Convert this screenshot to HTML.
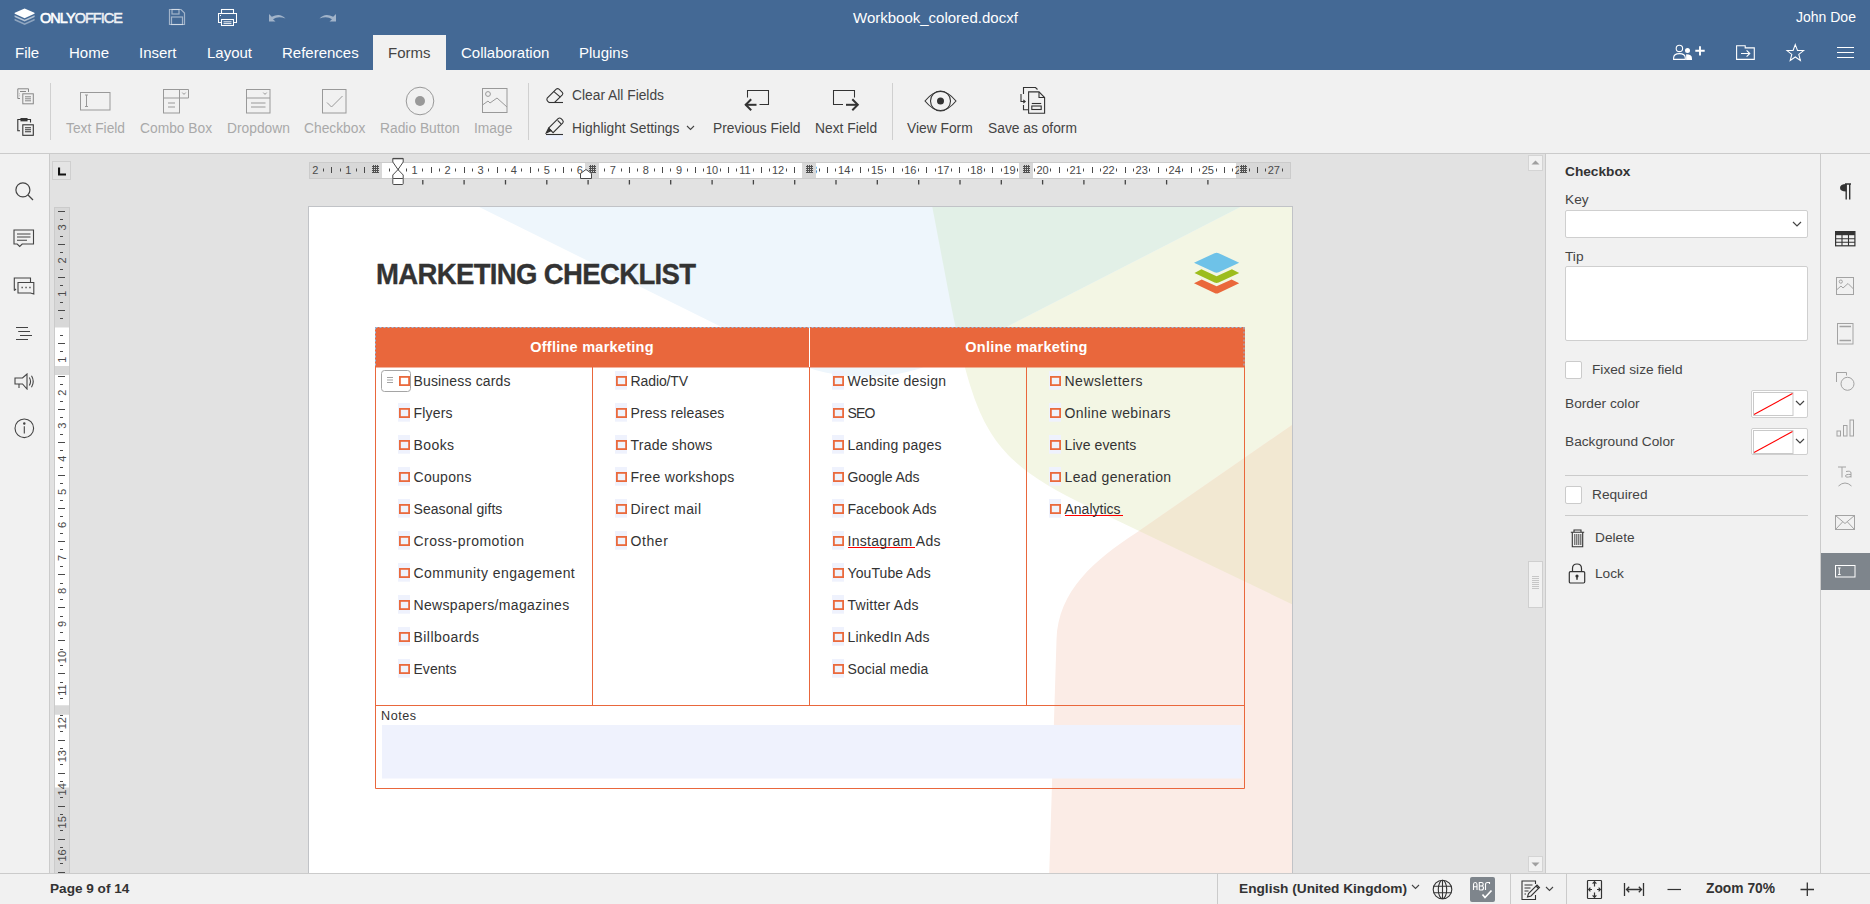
<!DOCTYPE html>
<html><head><meta charset="utf-8">
<style>
*{box-sizing:border-box;margin:0;padding:0}
html,body{width:1870px;height:904px;overflow:hidden;background:#f1f1f1;font-family:"Liberation Sans",sans-serif;position:relative}
.a{position:absolute}
#hdr{left:0;top:0;width:1870px;height:70px;background:#446995}
.tab{position:absolute;top:35px;height:35px;color:#fff;font-size:15px;line-height:35px}
#tb{left:0;top:70px;width:1870px;height:84px;background:#f1f1f1;border-bottom:1px solid #cbcbcb}
.lbl{position:absolute;font-size:13px;color:#444;white-space:nowrap;line-height:15px}
.dis{color:#a9a9a9}
.sep{position:absolute;width:1px;background:#d0d0d0}
#left{left:0;top:154px;width:50px;height:719px;background:#f1f1f1;border-right:1px solid #cbcbcb}
#canvas{left:50px;top:154px;width:1495px;height:719px;background:#e2e2e2}
#right{left:1545px;top:154px;width:275px;height:719px;background:#f1f1f1;border-left:1px solid #cbcbcb}
#rstrip{left:1820px;top:154px;width:50px;height:719px;background:#f1f1f1;border-left:1px solid #cbcbcb}
#status{left:0;top:873px;width:1870px;height:31px;background:#f1f1f1;border-top:1px solid #cbcbcb}
#page{left:308px;top:206px;width:985px;height:667px;background:#fff;overflow:hidden;border:1px solid #c1c3c7;border-bottom:none}
.it{font-family:"Liberation Sans",sans-serif;font-size:14px;letter-spacing:0.3px;color:#333;line-height:16px;white-space:nowrap}
.doc{font-family:"Liberation Sans",sans-serif;color:#333}
</style></head><body>
<div id="hdr" class="a">
<svg class="a" style="left:14px;top:8px" width="22" height="18" viewBox="0 0 22 18">
<path d="M0.6 10.8 L10.6 15.3 L20.6 10.8 V12.6 L10.6 17.1 L0.6 12.6 Z" fill="#fff" opacity=".4"/>
<path d="M0.6 7.2 L10.6 11.7 L20.6 7.2 V9 L10.6 13.5 L0.6 9 Z" fill="#fff" opacity=".6"/>
<path d="M10.6 0.4 L20.4 4.8 Q21 5.3 20.4 5.8 L10.6 10.2 L0.8 5.8 Q0.2 5.3 0.8 4.8 Z" fill="#fff"/>
</svg>
<div class="a" style="left:40px;top:10px;font:14.5px 'Liberation Sans';letter-spacing:-0.95px;-webkit-text-stroke:0.55px #fff;color:#fff;line-height:16px">ONLY<span style="color:rgba(255,255,255,.85);-webkit-text-stroke:0.55px rgba(255,255,255,.85)">OFFICE</span></div>
<svg class="a" style="left:168px;top:8px" width="18" height="18" viewBox="0 0 18 18" fill="none" stroke="#fff" stroke-opacity=".5" stroke-width="1.2">
<path d="M1.5 1.5 H13 L16.5 5 V16.5 H1.5 Z"/><rect x="4" y="1.5" width="7" height="4.5"/><rect x="3.5" y="9" width="11" height="7.5"/>
</svg>
<svg class="a" style="left:217px;top:8px" width="21" height="19" viewBox="217 8 21 19" fill="none" stroke="#fff" stroke-width="1.05">
<rect x="221.5" y="9.5" width="12" height="4"/><path d="M221.5 22.5 H218.5 V13.5 H236.5 V22.5 H233.5"/><rect x="221.5" y="19.5" width="12" height="6"/><path d="M223.5 21.8 H231.5 M223.5 23.6 H231.5" stroke-width="0.9"/><rect x="220" y="15" width="1" height="1" fill="#fff" stroke="none"/>
</svg>
<svg class="a" style="left:268px;top:13px" width="19" height="10" viewBox="0 0 19 10">
<path d="M1 1 L1 8.5 L7.5 8.5 L5 6.2 Q10 2.6 17.5 5.5 Q12 -0.6 3.8 3.8 Z" fill="#fff" opacity=".5"/>
</svg>
<svg class="a" style="left:318px;top:13px" width="19" height="10" viewBox="0 0 19 10">
<path d="M18 1 L18 8.5 L11.5 8.5 L14 6.2 Q9 2.6 1.5 5.5 Q7 -0.6 15.2 3.8 Z" fill="#fff" opacity=".5"/>
</svg>
<div class="a" style="left:853px;top:9px;font-size:15px;color:#fff;line-height:17px">Workbook_colored.docxf</div>
<div class="a" style="left:1796px;top:9px;font-size:14px;color:#fff;line-height:16px">John Doe</div>
<div class="tab" style="left:15px">File</div>
<div class="tab" style="left:69px">Home</div>
<div class="tab" style="left:139px">Insert</div>
<div class="tab" style="left:207px">Layout</div>
<div class="tab" style="left:282px">References</div>
<div class="a" style="left:373px;top:35px;width:73px;height:35px;background:#f1f1f1"></div>
<div class="tab" style="left:388px;color:#444">Forms</div>
<div class="tab" style="left:461px">Collaboration</div>
<div class="tab" style="left:579px">Plugins</div>


<svg class="a" style="left:1665px;top:38px" width="100" height="30" viewBox="1665 38 100 30" fill="none" stroke="#fff" stroke-width="1.1">
<circle cx="1679.4" cy="48.4" r="3.2"/><path d="M1673.6 59.4 V58 Q1673.6 53.6 1679.4 53.6 Q1685.3 53.6 1685.3 58 V59.4 Z"/>
<circle cx="1687.5" cy="50.6" r="2.5" fill="#fff" stroke="none"/><path d="M1686.1 59.9 V54.3 Q1692 54.3 1692 58.5 V59.9 Z" fill="#fff" stroke="none"/>
<path d="M1695.3 50.8 H1704.7 M1700 46.2 V55.4" stroke-width="1.9"/>
<path d="M1736.6 59.4 V45.7 H1745.2 V47.9 H1754.3 V59.4 Z"/><path d="M1741 53.5 H1749.8 M1746.6 50.3 L1749.8 53.5 L1746.6 56.7"/>
</svg>
<svg class="a" style="left:1775px;top:38px" width="90" height="30" viewBox="1775 38 90 30" fill="none" stroke="#fff" stroke-width="1.05">
<path d="M1795.3 44.6 L1797.5 50.4 L1803.6 50.6 L1798.8 54.4 L1800.4 60.5 L1795.3 57 L1790.2 60.5 L1791.8 54.4 L1787 50.6 L1793.1 50.4 Z" stroke-linejoin="miter"/>
<path d="M1837 47.5 H1854 M1837 52.5 H1854 M1837 57.5 H1854"/>
</svg>

</div>
<div id="tb" class="a">
<svg class="a" style="left:17px;top:18px" width="18" height="17" viewBox="0 0 18 17" fill="none" stroke="#888" stroke-width="1">
<path d="M3 10.5 H0.8 V0.8 H11.5 V4"/><path d="M3 3.5 H9 M2.5 5.8 H3 M2.5 7.8 H3"/><rect x="5.8" y="5.8" width="10.5" height="10"/><path d="M8 8.8 H14 M8 10.8 H14 M8 12.8 H14"/>
</svg>
<svg class="a" style="left:17px;top:48px" width="18" height="19" viewBox="0 0 18 19" fill="none" stroke="#333" stroke-width="1.1">
<path d="M3 12.8 H0.8 V1.5 H13.5 V4.5"/><rect x="4" y="0.4" width="6" height="2.4" fill="#333"/><rect x="5.8" y="6.8" width="10.5" height="10.5"/><path d="M8 9.8 H14 M8 11.8 H14 M8 13.8 H14"/>
</svg>
<div class="sep" style="left:50px;top:13px;height:57px"></div>

<svg class="a" style="left:80px;top:22px" width="31" height="19" viewBox="0 0 31 19" fill="none" stroke="#999" stroke-width="1">
<rect x="0.5" y="0.5" width="29.5" height="17.5"/><path d="M5 3 H8 M6.5 3 V14.5 M5 14.5 H8"/>
</svg>
<div class="lbl dis" style="left:66px;top:51px;font-size:13.8px">Text Field</div>
<svg class="a" style="left:163px;top:19px" width="27" height="25" viewBox="0 0 27 25" fill="none" stroke="#999" stroke-width="1">
<rect x="0.5" y="0.5" width="16" height="23.5"/><path d="M0.5 9 H25.5 V0.5 H16.5"/><path d="M19.3 3.6 L21 5.4 L22.7 3.6"/><path d="M5 14 H12 M5 18 H12"/>
</svg>
<div class="lbl dis" style="left:140px;top:51px;font-size:13.8px">Combo Box</div>
<svg class="a" style="left:246px;top:19px" width="25" height="25" viewBox="0 0 25 25" fill="none" stroke="#999" stroke-width="1">
<rect x="0.5" y="0.5" width="23.5" height="23.5"/><path d="M0.5 9 H24"/><path d="M17.3 3.6 L19 5.4 L20.7 3.6"/><path d="M5 14 H19.5 M5 18 H19.5"/>
</svg>
<div class="lbl dis" style="left:227px;top:51px;font-size:13.8px">Dropdown</div>
<svg class="a" style="left:322px;top:19px" width="25" height="25" viewBox="0 0 25 25" fill="none" stroke="#999" stroke-width="1">
<rect x="0.5" y="0.5" width="23.5" height="23.5"/><path d="M5 13.5 L9.5 18 L20.5 7"/>
</svg>
<div class="lbl dis" style="left:304px;top:51px;font-size:13.8px">Checkbox</div>
<svg class="a" style="left:405px;top:16px" width="30" height="30" viewBox="0 0 30 30" fill="none" stroke="#999" stroke-width="1">
<circle cx="15" cy="15" r="13.8"/><circle cx="15" cy="15" r="5" fill="#999" stroke="none"/>
</svg>
<div class="lbl dis" style="left:380px;top:51px;font-size:13.8px">Radio Button</div>
<svg class="a" style="left:482px;top:18px" width="26" height="26" viewBox="0 0 26 26" fill="none" stroke="#999" stroke-width="1">
<rect x="0.5" y="0.5" width="24.5" height="24"/><circle cx="6" cy="6" r="2.4"/><path d="M0.5 17 L6 13 L8 15 L15 10 L25 19"/>
</svg>
<div class="lbl dis" style="left:474px;top:51px;font-size:13.8px">Image</div>
<div class="sep" style="left:528px;top:13px;height:57px"></div>

<svg class="a" style="left:540px;top:14px" width="30" height="56" viewBox="540 84 30 56" fill="none" stroke="#333" stroke-width="1.1">
<path d="M549.2 102.5 Q546 100.3 547.2 98.2 L556.2 89.2 Q557.6 87.9 559 89.2 L562.3 92.4 Q563.4 93.6 562.3 94.8 L554.6 102.5 Z"/><path d="M553.9 91.6 L560.4 97.2"/><path d="M549 102.5 H563"/>
<path d="M548.6 128.2 L558.1 118.7 Q559.6 117.3 561.1 118.7 L562.6 120.2 Q564 121.7 562.6 123.2 L553.1 132.7 Z"/><path d="M546.2 133 L548.6 128.2 L551.1 130.7 Z" fill="#333"/><path d="M557.6 120.3 L561.1 123.8"/>
<rect x="546" y="135" width="17" height="4.5" fill="#eef2fd" stroke="none"/><path d="M546 134.5 H563" stroke-width="1.1"/>
</svg>
<div class="lbl" style="left:572px;top:18px;font-size:13.8px">Clear All Fields</div>

<div class="lbl" style="left:572px;top:51px;font-size:13.8px">Highlight Settings</div>
<svg class="a" style="left:686px;top:55px" width="9" height="6" viewBox="0 0 9 6" fill="none" stroke="#444" stroke-width="1.1"><path d="M1 1 L4.5 4.5 L8 1"/></svg>


<svg class="a" style="left:740px;top:15px" width="125" height="30" viewBox="740 85 125 30" fill="none" stroke="#333">
<path d="M747.5 97.5 V90.5 H768.5 V104.5 H759.5" stroke-width="1.05"/><path d="M745.5 104.8 H756.5" stroke-width="2"/><path d="M751.2 99.3 L745.7 104.8 L751.2 110.3" stroke-width="2"/>
<path d="M854.5 97.5 V90.5 H833.5 V104.5 H843" stroke-width="1.05"/><path d="M846 104.8 H857" stroke-width="2"/><path d="M852.3 99.3 L857.8 104.8 L852.3 110.3" stroke-width="2"/>
</svg>
<div class="lbl" style="left:713px;top:51px;font-size:13.8px">Previous Field</div>

<div class="lbl" style="left:815px;top:51px;font-size:13.8px">Next Field</div>
<div class="sep" style="left:892px;top:13px;height:57px"></div>

<svg class="a" style="left:924px;top:20px" width="33" height="22" viewBox="0 0 33 22" fill="none" stroke="#333" stroke-width="1.1">
<path d="M1 11 Q16.5 -8 32 11 Q16.5 30 1 11 Z"/><circle cx="16.5" cy="11" r="10"/><circle cx="16.5" cy="11" r="3.5" fill="#333" stroke="none"/>
</svg>
<div class="lbl" style="left:907px;top:51px;font-size:13.8px">View Form</div>
<svg class="a" style="left:1018px;top:15px" width="30" height="31" viewBox="1018 85 30 31" fill="none" stroke="#333" stroke-width="1.1">
<path d="M1023.5 94 V87.5 H1035.5 L1037.5 89.5"/><path d="M1021 94 V101.5 H1025"/><path d="M1023.3 99.8 L1025.2 101.5 L1023.3 103.2"/><path d="M1023.5 105 V109.8 H1028"/>
<path d="M1028.6 91.9 H1039 L1044.6 97.5 V113.3 H1028.6 Z"/><path d="M1039 91.9 V97.5 H1044.6"/><path d="M1031.8 103.5 H1041.2"/><rect x="1031.8" y="106" width="9.4" height="3.5"/>
</svg>
<div class="lbl" style="left:988px;top:51px;font-size:13.8px">Save as oform</div>
</div>
<div id="left" class="a">
<svg class="a" style="left:14px;top:27px" width="21" height="21" viewBox="0 0 21 21" fill="none" stroke="#444" stroke-width="1.2">
<circle cx="8.9" cy="8.9" r="7"/><path d="M14 14 L19 19"/>
</svg>
<svg class="a" style="left:13px;top:75px" width="22" height="20" viewBox="0 0 22 20" fill="none" stroke="#444" stroke-width="1.1">
<path d="M1 1 H20.5 V15 H9.2 L6.7 17.5 L4.2 15 H1 Z"/><path d="M4 5 H17.5 M4 8 H17.5 M4 11.2 H14"/>
</svg>
<svg class="a" style="left:13px;top:123px" width="22" height="20" viewBox="0 0 22 20" fill="none" stroke="#444" stroke-width="1.1">
<path d="M1.3 13.5 V1 H17.5 V5"/><path d="M1.3 13.5 L3 12"/><path d="M5 5.5 H20.8 V17 L17.5 16 H5 Z"/><path d="M8.5 10.5 H9.8 M12.4 10.5 H13.7 M16.3 10.5 H17.6" stroke-width="1.6"/>
</svg>
<svg class="a" style="left:15px;top:172px" width="18" height="15" viewBox="0 0 18 15" stroke="#444" stroke-width="1.1">
<path d="M1 1.5 H13 M3.2 5.5 H15 M5 9.5 H17 M1 13.5 H13"/>
</svg>
<svg class="a" style="left:14px;top:219px" width="21" height="17" viewBox="0 0 21 17" fill="none" stroke="#444" stroke-width="1.1">
<path d="M1 5 H8.5 L13 1 V16 L8.5 11 H1 Z"/><path d="M5 11 V15"/><path d="M15.3 4.5 Q17.8 8.5 15.3 12.5 M17.5 2.8 Q21 8.5 17.5 14.2"/>
</svg>
<svg class="a" style="left:14px;top:264px" width="21" height="21" viewBox="0 0 21 21" fill="none" stroke="#444" stroke-width="1.1">
<circle cx="10.3" cy="10.3" r="9.3"/><path d="M10.3 8.2 V15.5"/><circle cx="10.3" cy="5.6" r=".7" fill="#444"/>
</svg>
</div>
<div id="canvas" class="a"></div>
<div class="a" style="left:52px;top:161px;width:19px;height:19px;background:#e4e4e4;border:1px solid #cfcfcf"></div>
<svg class="a" style="left:58px;top:167px" width="9" height="9" viewBox="0 0 9 9"><path d="M1 0.5 V7.5 H8" fill="none" stroke="#111" stroke-width="2.2"/></svg>
<svg class="a" style="left:300px;top:150px" width="1000" height="40" viewBox="300 150 1000 40">
<rect x="309.5" y="162.5" width="981" height="16" fill="#d8d8d8" stroke="#cbcbcb" stroke-width="1"/>
<rect x="382" y="163" width="203" height="15" fill="#fff"/>
<rect x="599" y="163" width="203" height="15" fill="#fff"/>
<rect x="816" y="163" width="203" height="15" fill="#fff"/>
<rect x="1033" y="163" width="203" height="15" fill="#fff"/>
<path d="M323.5 168.5V171.5 M331.5 167V173 M340.5 168.5V171.5 M356.5 168.5V171.5 M364.5 167V173 M373.5 168.5V171.5 M389.5 168.5V171.5 M398.5 167V173 M406.5 168.5V171.5 M422.5 168.5V171.5 M431.5 167V173 M439.5 168.5V171.5 M455.5 168.5V171.5 M464.5 167V173 M472.5 168.5V171.5 M488.5 168.5V171.5 M497.5 167V173 M505.5 168.5V171.5 M521.5 168.5V171.5 M530.5 167V173 M538.5 168.5V171.5 M555.5 168.5V171.5 M563.5 167V173 M571.5 168.5V171.5 M588.5 168.5V171.5 M596.5 167V173 M604.5 168.5V171.5 M621.5 168.5V171.5 M629.5 167V173 M637.5 168.5V171.5 M654.5 168.5V171.5 M662.5 167V173 M670.5 168.5V171.5 M687.5 168.5V171.5 M695.5 167V173 M703.5 168.5V171.5 M720.5 168.5V171.5 M728.5 167V173 M736.5 168.5V171.5 M753.5 168.5V171.5 M761.5 167V173 M769.5 168.5V171.5 M786.5 168.5V171.5 M794.5 167V173 M802.5 168.5V171.5 M819.5 168.5V171.5 M827.5 167V173 M835.5 168.5V171.5 M852.5 168.5V171.5 M860.5 167V173 M868.5 168.5V171.5 M885.5 168.5V171.5 M893.5 167V173 M902.5 168.5V171.5 M918.5 168.5V171.5 M926.5 167V173 M935.5 168.5V171.5 M951.5 168.5V171.5 M959.5 167V173 M968.5 168.5V171.5 M984.5 168.5V171.5 M992.5 167V173 M1001.5 168.5V171.5 M1017.5 168.5V171.5 M1025.5 167V173 M1034.5 168.5V171.5 M1050.5 168.5V171.5 M1059.5 167V173 M1067.5 168.5V171.5 M1083.5 168.5V171.5 M1092.5 167V173 M1100.5 168.5V171.5 M1116.5 168.5V171.5 M1125.5 167V173 M1133.5 168.5V171.5 M1149.5 168.5V171.5 M1158.5 167V173 M1166.5 168.5V171.5 M1182.5 168.5V171.5 M1191.5 167V173 M1199.5 168.5V171.5 M1216.5 168.5V171.5 M1224.5 167V173 M1232.5 168.5V171.5 M1249.5 168.5V171.5 M1257.5 167V173 M1265.5 168.5V171.5 M1282.5 168.5V171.5" stroke="#4a4a4a" stroke-width="1"/>
<g font-family="Liberation Sans" font-size="11" fill="#4a4a4a" text-anchor="middle"><text x="315.4" y="174">2</text><text x="348.4" y="174">1</text><text x="414.6" y="174">1</text><text x="447.6" y="174">2</text><text x="480.6" y="174">3</text><text x="513.7" y="174">4</text><text x="546.8" y="174">5</text><text x="579.8" y="174">6</text><text x="612.8" y="174">7</text><text x="645.9" y="174">8</text><text x="679.0" y="174">9</text><text x="712.0" y="174">10</text><text x="745.0" y="174">11</text><text x="778.1" y="174">12</text><text x="811.1" y="174">13</text><text x="844.2" y="174">14</text><text x="877.2" y="174">15</text><text x="910.3" y="174">16</text><text x="943.3" y="174">17</text><text x="976.4" y="174">18</text><text x="1009.4" y="174">19</text><text x="1042.5" y="174">20</text><text x="1075.5" y="174">21</text><text x="1108.6" y="174">22</text><text x="1141.7" y="174">23</text><text x="1174.7" y="174">24</text><text x="1207.8" y="174">25</text><text x="1240.8" y="174">26</text><text x="1273.8" y="174">27</text></g>
<rect x="585" y="163" width="14" height="15" fill="#d8d8d8"/>
<rect x="802" y="163" width="14" height="15" fill="#d8d8d8"/>
<rect x="1019" y="163" width="14" height="15" fill="#d8d8d8"/>
<rect x="371" y="164" width="9" height="10" fill="#d8d8d8"/><path d="M373.5 165V173 M375.5 165V173 M377.5 165V173 M372 166.5H379 M372 168.5H379 M372 170.5H379 M372 172.5H379" stroke="#505050" stroke-width="1"/>
<rect x="588" y="164" width="9" height="10" fill="#d8d8d8"/><path d="M590.5 165V173 M592.5 165V173 M594.5 165V173 M589 166.5H596 M589 168.5H596 M589 170.5H596 M589 172.5H596" stroke="#505050" stroke-width="1"/>
<rect x="805" y="164" width="9" height="10" fill="#d8d8d8"/><path d="M807.5 165V173 M809.5 165V173 M811.5 165V173 M806 166.5H813 M806 168.5H813 M806 170.5H813 M806 172.5H813" stroke="#505050" stroke-width="1"/>
<rect x="1022" y="164" width="9" height="10" fill="#d8d8d8"/><path d="M1024.5 165V173 M1026.5 165V173 M1028.5 165V173 M1023 166.5H1030 M1023 168.5H1030 M1023 170.5H1030 M1023 172.5H1030" stroke="#505050" stroke-width="1"/>
<rect x="1239" y="164" width="9" height="10" fill="#d8d8d8"/><path d="M1241.5 165V173 M1243.5 165V173 M1245.5 165V173 M1240 166.5H1247 M1240 168.5H1247 M1240 170.5H1247 M1240 172.5H1247" stroke="#505050" stroke-width="1"/>
<path d="M392.8 158.5H403.2V162L398 169.6L392.8 162Z M392.8 178.5V175L398 169.6L403.2 175V178.5Z" fill="#fff" stroke="#4a4a4a" stroke-width="1" stroke-linejoin="round"/><path d="M392.8 158.6H403.2" stroke="#4a4a4a" stroke-width="1.4"/>
<rect x="392.8" y="178.5" width="10.4" height="6" rx="0.8" fill="#fff" stroke="#4a4a4a" stroke-width="1"/>
<path d="M580.5 178.5V173.5L586 169.5L591.5 173.5V178.5Z" fill="#fff" stroke="#4a4a4a" stroke-width="1"/>
<path d="M422.8 180V184.5 M464.1 180V184.5 M505.5 180V184.5 M546.8 180V184.5 M588.1 180V184.5 M629.4 180V184.5 M670.7 180V184.5 M712.1 180V184.5 M753.4 180V184.5 M794.7 180V184.5 M836.0 180V184.5 M877.3 180V184.5 M918.7 180V184.5 M960.0 180V184.5 M1001.3 180V184.5 M1042.6 180V184.5 M1083.9 180V184.5 M1125.3 180V184.5 M1166.6 180V184.5 M1207.9 180V184.5" stroke="#444" stroke-width="1.3"/>
</svg>
<svg class="a" style="left:50px;top:154px" width="30" height="719" viewBox="50 154 30 719">
<rect x="54.5" y="207.5" width="15" height="680" fill="#d8d8d8" stroke="#cbcbcb" stroke-width="1"/>
<rect x="55" y="327.5" width="14" height="38.5" fill="#fff"/>
<rect x="55" y="375" width="14" height="330.5" fill="#fff"/>
<rect x="55" y="714.5" width="14" height="73.0" fill="#fff"/>
<path d="M58 211.5H65 M60 219.5H63 M60 236.5H63 M58 244.5H65 M60 252.5H63 M60 269.5H63 M58 277.5H65 M60 285.5H63 M60 302.5H63 M58 310.5H65 M60 318.5H63 M60 335.5H63 M58 343.5H65 M60 351.5H63 M60 368.5H63 M58 376.5H65 M60 384.5H63 M60 401.5H63 M58 409.5H65 M60 417.5H63 M60 434.5H63 M58 442.5H65 M60 450.5H63 M60 467.5H63 M58 475.5H65 M60 483.5H63 M60 500.5H63 M58 508.5H65 M60 516.5H63 M60 533.5H63 M58 541.5H65 M60 549.5H63 M60 566.5H63 M58 574.5H65 M60 583.5H63 M60 599.5H63 M58 607.5H65 M60 616.5H63 M60 632.5H63 M58 640.5H65 M60 649.5H63 M60 665.5H63 M58 673.5H65 M60 682.5H63 M60 698.5H63 M58 706.5H65 M60 715.5H63 M60 731.5H63 M58 740.5H65 M60 748.5H63 M60 764.5H63 M58 773.5H65 M60 781.5H63 M60 797.5H63 M58 806.5H65 M60 814.5H63 M60 830.5H63 M58 839.5H65 M60 847.5H63 M60 863.5H63 M58 872.5H65" stroke="#4a4a4a" stroke-width="1"/>
<g font-family="Liberation Sans" font-size="11" fill="#4a4a4a" text-anchor="middle"><text transform="translate(62,227.5) rotate(-90)" x="0" y="4">3</text><text transform="translate(62,260.5) rotate(-90)" x="0" y="4">2</text><text transform="translate(62,293.6) rotate(-90)" x="0" y="4">1</text><text transform="translate(62,359.7) rotate(-90)" x="0" y="4">1</text><text transform="translate(62,392.7) rotate(-90)" x="0" y="4">2</text><text transform="translate(62,425.8) rotate(-90)" x="0" y="4">3</text><text transform="translate(62,458.8) rotate(-90)" x="0" y="4">4</text><text transform="translate(62,491.9) rotate(-90)" x="0" y="4">5</text><text transform="translate(62,524.9) rotate(-90)" x="0" y="4">6</text><text transform="translate(62,558.0) rotate(-90)" x="0" y="4">7</text><text transform="translate(62,591.0) rotate(-90)" x="0" y="4">8</text><text transform="translate(62,624.0) rotate(-90)" x="0" y="4">9</text><text transform="translate(62,657.1) rotate(-90)" x="0" y="4">10</text><text transform="translate(62,690.1) rotate(-90)" x="0" y="4">11</text><text transform="translate(62,723.2) rotate(-90)" x="0" y="4">12</text><text transform="translate(62,756.2) rotate(-90)" x="0" y="4">13</text><text transform="translate(62,789.3) rotate(-90)" x="0" y="4">14</text><text transform="translate(62,822.3) rotate(-90)" x="0" y="4">15</text><text transform="translate(62,855.4) rotate(-90)" x="0" y="4">16</text></g>
<rect x="55" y="366" width="14" height="9" fill="#d8d8d8"/><rect x="55" y="705.5" width="14" height="9" fill="#d8d8d8"/>
</svg>
<div class="a" style="left:1528px;top:155px;width:15px;height:16px;background:#f1f1f1;border:1px solid #d4d4d4"></div>
<svg class="a" style="left:1531px;top:160px" width="9" height="5" viewBox="0 0 9 5"><path d="M0.5 4.5 L4.5 0.5 L8.5 4.5Z" fill="#a0a0a0"/></svg>
<div class="a" style="left:1528px;top:561px;width:15px;height:47px;background:#f1f1f1;border:1px solid #cfcfcf"></div>
<svg class="a" style="left:1532px;top:575px" width="7" height="14" viewBox="0 0 7 14" stroke="#c6c6c6" stroke-width="1"><path d="M0 1.5H7M0 3.5H7M0 5.5H7M0 7.5H7M0 9.5H7M0 11.5H7M0 13.5H7"/></svg>
<div class="a" style="left:1528px;top:856px;width:15px;height:16px;background:#f1f1f1;border:1px solid #d4d4d4"></div>
<svg class="a" style="left:1531px;top:862px" width="9" height="5" viewBox="0 0 9 5"><path d="M0.5 0.5 L4.5 4.5 L8.5 0.5Z" fill="#a0a0a0"/></svg>

<div id="right" class="a"></div>
<div class="lbl" style="left:1565px;top:164px;font-size:13.7px;font-weight:bold;color:#333">Checkbox</div>
<div class="lbl" style="left:1565px;top:192px;font-size:13.7px">Key</div>
<div class="a" style="left:1565px;top:210px;width:243px;height:28px;background:#fff;border:1px solid #cfcfcf;border-radius:2px"></div>
<svg class="a" style="left:1792px;top:221px" width="10" height="7" viewBox="0 0 10 7" fill="none" stroke="#444" stroke-width="1.2"><path d="M1 1 L5 5 L9 1"/></svg>
<div class="lbl" style="left:1565px;top:249px;font-size:13.7px">Tip</div>
<div class="a" style="left:1565px;top:266px;width:243px;height:75px;background:#fff;border:1px solid #cfcfcf;border-radius:2px"></div>
<div class="a" style="left:1565px;top:361px;width:17px;height:18px;background:#fff;border:1px solid #cbcbcb;border-radius:2px"></div>
<div class="lbl" style="left:1592px;top:362px;font-size:13.7px">Fixed size field</div>
<div class="lbl" style="left:1565px;top:396px;font-size:13.7px">Border color</div>
<div class="a" style="left:1751px;top:390px;width:57px;height:28px;background:#fff;border:1px solid #cfcfcf;border-radius:2px"></div>
<svg class="a" style="left:1753px;top:392px" width="41" height="24" viewBox="0 0 41 24"><rect x="0.5" y="0.5" width="39.5" height="23" fill="#fff" stroke="#c9c9c9"/><path d="M1 22.5 L39.5 1.5" stroke="#f00" stroke-width="1.1"/></svg>
<svg class="a" style="left:1795px;top:400px" width="10" height="7" viewBox="0 0 10 7" fill="none" stroke="#444" stroke-width="1.2"><path d="M1 1 L5 5 L9 1"/></svg>
<div class="lbl" style="left:1565px;top:434px;font-size:13.7px">Background Color</div>
<div class="a" style="left:1751px;top:428px;width:57px;height:27px;background:#fff;border:1px solid #cfcfcf;border-radius:2px"></div>
<svg class="a" style="left:1753px;top:430px" width="41" height="24" viewBox="0 0 41 24"><rect x="0.5" y="0.5" width="39.5" height="23" fill="#fff" stroke="#c9c9c9"/><path d="M1 22.5 L39.5 1.5" stroke="#f00" stroke-width="1.1"/></svg>
<svg class="a" style="left:1795px;top:438px" width="10" height="7" viewBox="0 0 10 7" fill="none" stroke="#444" stroke-width="1.2"><path d="M1 1 L5 5 L9 1"/></svg>
<div class="a" style="left:1565px;top:475px;width:243px;height:1px;background:#cbcbcb"></div>
<div class="a" style="left:1565px;top:486px;width:17px;height:18px;background:#fff;border:1px solid #cbcbcb;border-radius:2px"></div>
<div class="lbl" style="left:1592px;top:487px;font-size:13.7px">Required</div>
<div class="a" style="left:1565px;top:515px;width:243px;height:1px;background:#cbcbcb"></div>
<svg class="a" style="left:1570px;top:529px" width="15" height="19" viewBox="0 0 15 19" fill="none" stroke="#333" stroke-width="1.1">
<path d="M0.8 3.2 H14.2 M4 3.2 V1 H11 V3.2"/><path d="M2.3 3.2 V17.8 H12.7 V3.2"/><path d="M4.8 5 V16 M6.8 5 V16 M8.8 5 V16 M10.8 5 V16" stroke-width="0.9"/>
</svg>
<div class="lbl" style="left:1595px;top:530px;font-size:13.7px">Delete</div>
<svg class="a" style="left:1568px;top:563px" width="18" height="21" viewBox="0 0 18 21" fill="none" stroke="#333" stroke-width="1.2">
<path d="M4.5 8.5 V5.5 Q4.5 1 9 1 Q13.5 1 13.5 5.5 V8.5"/><rect x="1.3" y="8.6" width="15.4" height="11.4" rx="1.2"/><circle cx="9" cy="13" r="1.6" fill="#333" stroke="none"/><path d="M9 13 V16.8" stroke-width="1.5"/>
</svg>
<div class="lbl" style="left:1595px;top:566px;font-size:13.7px">Lock</div>

<div id="rstrip" class="a"></div>
<svg class="a" style="left:1839px;top:183px" width="13" height="17" viewBox="0 0 13 17">
<path d="M6 1 H12 M7.2 1 V16.5 M10.7 1 V16.5" stroke="#333" stroke-width="1.4" fill="none"/><path d="M7.2 1 Q1 1 1 4.8 Q1 8.6 7.2 8.6 Z" fill="#333"/>
</svg>
<svg class="a" style="left:1835px;top:231px" width="21" height="16" viewBox="0 0 21 16">
<rect x="0.6" y="0.6" width="19.3" height="14.2" fill="none" stroke="#333" stroke-width="1.2"/><rect x="0.6" y="0.6" width="19.3" height="3.6" fill="#333"/>
<path d="M0.6 7.8 H19.9 M0.6 11.3 H19.9 M7 0.6 V14.8 M13.5 0.6 V14.8" stroke="#333" stroke-width="1.1"/>
</svg>
<svg class="a" style="left:1836px;top:277px" width="19" height="19" viewBox="0 0 19 19" fill="none" stroke="#a3a3a3" stroke-width="1">
<rect x="0.5" y="0.5" width="17" height="17"/><circle cx="4.8" cy="4.6" r="1.6"/><path d="M0.5 13 L5 9 L7 11 L12 6.5 L17.5 12"/>
</svg>
<svg class="a" style="left:1837px;top:323px" width="17" height="22" viewBox="0 0 17 22" fill="none" stroke="#a3a3a3" stroke-width="1">
<rect x="0.5" y="0.5" width="15.5" height="20.5"/><path d="M2.5 3.5 H14 M2.5 17.5 H14" stroke-width="1.4"/>
</svg>
<svg class="a" style="left:1836px;top:372px" width="19" height="19" viewBox="0 0 19 19" fill="none" stroke="#a3a3a3" stroke-width="1">
<path d="M0.5 10 V0.5 H10.5 V3.5"/><circle cx="11.5" cy="11.8" r="6.5" fill="#f1f1f1"/>
</svg>
<svg class="a" style="left:1836px;top:419px" width="19" height="18" viewBox="0 0 19 18" fill="none" stroke="#a3a3a3" stroke-width="1">
<rect x="1" y="12" width="3.5" height="5"/><rect x="7.5" y="6.5" width="3.5" height="10.5"/><rect x="14" y="1" width="3.5" height="16"/>
</svg>
<svg class="a" style="left:1836px;top:466px" width="18" height="21" viewBox="0 0 18 21" fill="none" stroke="#a3a3a3" stroke-width="1">
<path d="M2 1 H10 M6 1 V11.5"/><path d="M10 5.5 Q15 4.5 15 7 V11.5 M15 8.5 Q9.5 8 9.5 10 Q9.5 12 15 10.5"/><path d="M2.5 20 Q9 14 15.5 20"/>
</svg>
<svg class="a" style="left:1835px;top:515px" width="21" height="16" viewBox="0 0 21 16" fill="none" stroke="#a3a3a3" stroke-width="1">
<rect x="0.5" y="0.5" width="19" height="14"/><path d="M0.5 0.5 L10 8.5 L19.5 0.5 M0.5 14.5 L7.5 7 M19.5 14.5 L12.5 7"/>
</svg>
<div class="a" style="left:1821px;top:553px;width:49px;height:37px;background:#7e858c"></div>
<svg class="a" style="left:1835px;top:565px" width="21" height="13" viewBox="0 0 21 13" fill="none" stroke="#fff" stroke-width="1">
<rect x="0.5" y="0.5" width="19.5" height="11.5"/><path d="M3 3 H5.6 M4.3 3 V9.5 M3 9.5 H5.6"/>
</svg>

<div id="status" class="a"></div>
<div class="lbl" style="left:50px;top:881px;font-size:13.6px;font-weight:bold;color:#333">Page 9 of 14</div>
<div class="a" style="left:1217px;top:874px;width:1px;height:30px;background:#cbcbcb"></div>
<div class="lbl" style="left:1239px;top:881px;font-size:13.7px;font-weight:bold;color:#333">English (United Kingdom)</div>
<svg class="a" style="left:1411px;top:884px" width="9" height="6" viewBox="0 0 9 6" fill="none" stroke="#444" stroke-width="1.1"><path d="M1 1 L4.5 4.5 L8 1"/></svg>
<svg class="a" style="left:1432px;top:879px" width="21" height="21" viewBox="0 0 21 21" fill="none" stroke="#333" stroke-width="1.1">
<circle cx="10.5" cy="10.5" r="9.3"/><ellipse cx="10.5" cy="10.5" rx="4.2" ry="9.3"/><path d="M10.5 1.2 V19.8 M1.5 7.2 H19.5 M1.5 13.8 H19.5"/>
</svg>
<div class="a" style="left:1470px;top:877px;width:25px;height:25px;background:#7e858c;border-radius:2px"></div>
<svg class="a" style="left:1470px;top:877px" width="25" height="25" viewBox="0 0 25 25" fill="none" stroke="#fff" stroke-width="1.1">
<path d="M3.5 13 V7.5 Q3.5 5.5 5.3 5.5 Q7 5.5 7 7.5 V13 M3.5 9.8 H7"/><path d="M9.3 13 V5.5 H11.5 Q13.2 5.5 13.2 7.3 Q13.2 9 11.5 9 H9.3 M11.5 9 Q13.5 9 13.5 11 Q13.5 13 11.5 13 H9.3"/><path d="M15.5 13 V7.5 Q15.5 5.5 17.5 5.5 H19.5 V7"/><path d="M12.5 17.5 L15 20.5 L21.5 13.5" stroke-width="1.7"/>
</svg>
<div class="a" style="left:1510px;top:874px;width:1px;height:30px;background:#cbcbcb"></div>
<svg class="a" style="left:1521px;top:880px" width="21" height="21" viewBox="0 0 21 21" fill="none" stroke="#333" stroke-width="1.1">
<path d="M14.5 4 V1 H1 V19.5 H14.5 V15"/><path d="M3.5 5 H11.5 M3.5 8 H9.5 M3.5 11 H7.5 M3.5 14 H5"/><path d="M6.5 17 L7.5 13.5 L16 5 L18.5 7.5 L10 16 Z M15 6 L17.5 8.5"/>
</svg>
<svg class="a" style="left:1545px;top:886px" width="9" height="6" viewBox="0 0 9 6" fill="none" stroke="#444" stroke-width="1.1"><path d="M1 1 L4.5 4.5 L8 1"/></svg>
<div class="a" style="left:1566px;top:874px;width:1px;height:30px;background:#cbcbcb"></div>
<svg class="a" style="left:1580px;top:876px" width="70" height="26" viewBox="1580 876 70 26" fill="none" stroke="#333" stroke-width="1.2">
<rect x="1587.5" y="880.5" width="14" height="18" rx="0.8"/><path d="M1594.5 886.5 V881.8 M1592.6 883.6 L1594.5 881.7 L1596.4 883.6 M1594.5 892.5 V897.2 M1592.6 895.4 L1594.5 897.3 L1596.4 895.4 M1592 889.5 H1588.7 M1590.4 887.6 L1588.6 889.5 L1590.4 891.4 M1597 889.5 H1600.3 M1598.6 887.6 L1600.4 889.5 L1598.6 891.4"/>
<path d="M1624.5 883 V896 M1643.5 883 V896 M1626.5 889.5 H1641.5 M1629.2 886.8 L1626.5 889.5 L1629.2 892.2 M1638.8 886.8 L1641.5 889.5 L1638.8 892.2" stroke-width="1.3"/>
</svg>

<svg class="a" style="left:1667px;top:888px" width="15" height="3" viewBox="0 0 15 3"><path d="M0.5 1.5 H14" stroke="#333" stroke-width="1.2"/></svg>
<div class="lbl" style="left:1706px;top:881px;font-size:13.8px;font-weight:bold;color:#333">Zoom 70%</div>
<svg class="a" style="left:1800px;top:882px" width="15" height="15" viewBox="0 0 15 15"><path d="M0.5 7.5 H14 M7.3 0.5 V14" stroke="#333" stroke-width="1.3"/></svg>

<div id="page" class="a">
<svg class="a" style="left:0;top:0" width="983" height="666" viewBox="309 207 983 666">
<defs><clipPath id="cy"><path d="M931 200 L950 300 C976 430 989 459 1089 507 L1300 608 L1300 200 Z"/></clipPath><clipPath id="cp"><path d="M1300 419.4 L1136 533 C1095 560 1058 590 1056.5 640 L1049 880 L1300 880 Z"/></clipPath></defs>
<path d="M931 200 L950 300 C976 430 989 459 1089 507 L1300 608 L1300 200 Z" fill="#f3f6e4"/>
<path d="M465 200 L784 358 A184 184 0 0 0 949 356.5 L1254 200 Z" fill="#eef6fc"/>
<path d="M465 200 L784 358 A184 184 0 0 0 949 356.5 L1254 200 Z" fill="#e2f0e7" clip-path="url(#cy)"/>
<path d="M1300 419.4 L1136 533 C1095 560 1058 590 1056.5 640 L1049 880 L1300 880 Z" fill="#fbece6"/>
<path d="M931 200 L950 300 C976 430 989 459 1089 507 L1300 608 L1300 200 Z" fill="#f2e8d2" clip-path="url(#cp)"/>
<path d="M1194 262.7 L1214.5 253.2 Q1216.6 252.4 1218.7 253.2 L1239.2 262.7 L1218.7 272.3 Q1216.6 273.2 1214.5 272.3 Z" fill="#6ec2e8"/>
<path d="M1194.5 273 L1201.4 269.3 L1216.6 276.3 L1231.9 269.3 L1239.2 273 L1218.7 282.6 Q1216.6 283.4 1214.5 282.6 Z" fill="#9cbd1d"/>
<path d="M1194 283.3 L1201.7 279.4 L1216.6 286.3 L1231.6 279.4 L1239.2 283.3 L1218.7 293 Q1216.6 294 1214.5 293 Z" fill="#ea683b"/>
<rect x="375" y="327" width="869.5" height="40.5" fill="#e9673c"/>
<path d="M809.5 327 V367.5" stroke="#fff" stroke-width="1"/>
<g stroke="#e9673c" stroke-width="1" fill="none"><path d="M375.5 327 V788.5 H1244.5 V327"/><path d="M375 705.5 H1244.5"/><path d="M592.5 367 V705.5 M809.5 367 V705.5 M1026.5 367 V705.5"/></g>
<path d="M375.5 327.5 H1244.5 M375.5 327.5 V367 M1244 327.5 V367" stroke="#8fc0ea" stroke-width="1" stroke-dasharray="2 2" fill="none"/>
<rect x="382" y="725" width="860" height="53.5" fill="#eff2fd"/>
<rect x="399.9" y="376.9" width="9.2" height="8.2" fill="#fff" stroke="#ea6a3d" stroke-width="1.8"/>
<rect x="398" y="403" width="12" height="18.7" fill="#eff2fd"/>
<rect x="399.9" y="408.9" width="9.2" height="8.2" fill="#eff3fc" stroke="#ea6a3d" stroke-width="1.8"/>
<rect x="398" y="435" width="12" height="18.7" fill="#eff2fd"/>
<rect x="399.9" y="440.9" width="9.2" height="8.2" fill="#eff3fc" stroke="#ea6a3d" stroke-width="1.8"/>
<rect x="398" y="467" width="12" height="18.7" fill="#eff2fd"/>
<rect x="399.9" y="472.9" width="9.2" height="8.2" fill="#eff3fc" stroke="#ea6a3d" stroke-width="1.8"/>
<rect x="398" y="499" width="12" height="18.7" fill="#eff2fd"/>
<rect x="399.9" y="504.9" width="9.2" height="8.2" fill="#eff3fc" stroke="#ea6a3d" stroke-width="1.8"/>
<rect x="398" y="531" width="12" height="18.7" fill="#eff2fd"/>
<rect x="399.9" y="536.9" width="9.2" height="8.2" fill="#eff3fc" stroke="#ea6a3d" stroke-width="1.8"/>
<rect x="398" y="563" width="12" height="18.7" fill="#eff2fd"/>
<rect x="399.9" y="568.9" width="9.2" height="8.2" fill="#eff3fc" stroke="#ea6a3d" stroke-width="1.8"/>
<rect x="398" y="595" width="12" height="18.7" fill="#eff2fd"/>
<rect x="399.9" y="600.9" width="9.2" height="8.2" fill="#eff3fc" stroke="#ea6a3d" stroke-width="1.8"/>
<rect x="398" y="627" width="12" height="18.7" fill="#eff2fd"/>
<rect x="399.9" y="632.9" width="9.2" height="8.2" fill="#eff3fc" stroke="#ea6a3d" stroke-width="1.8"/>
<rect x="398" y="659" width="12" height="18.7" fill="#eff2fd"/>
<rect x="399.9" y="664.9" width="9.2" height="8.2" fill="#eff3fc" stroke="#ea6a3d" stroke-width="1.8"/>
<rect x="615" y="371" width="12" height="18.7" fill="#eff2fd"/>
<rect x="616.9" y="376.9" width="9.2" height="8.2" fill="#eff3fc" stroke="#ea6a3d" stroke-width="1.8"/>
<rect x="615" y="403" width="12" height="18.7" fill="#eff2fd"/>
<rect x="616.9" y="408.9" width="9.2" height="8.2" fill="#eff3fc" stroke="#ea6a3d" stroke-width="1.8"/>
<rect x="615" y="435" width="12" height="18.7" fill="#eff2fd"/>
<rect x="616.9" y="440.9" width="9.2" height="8.2" fill="#eff3fc" stroke="#ea6a3d" stroke-width="1.8"/>
<rect x="615" y="467" width="12" height="18.7" fill="#eff2fd"/>
<rect x="616.9" y="472.9" width="9.2" height="8.2" fill="#eff3fc" stroke="#ea6a3d" stroke-width="1.8"/>
<rect x="615" y="499" width="12" height="18.7" fill="#eff2fd"/>
<rect x="616.9" y="504.9" width="9.2" height="8.2" fill="#eff3fc" stroke="#ea6a3d" stroke-width="1.8"/>
<rect x="615" y="531" width="12" height="18.7" fill="#eff2fd"/>
<rect x="616.9" y="536.9" width="9.2" height="8.2" fill="#eff3fc" stroke="#ea6a3d" stroke-width="1.8"/>
<rect x="832" y="371" width="12" height="18.7" fill="#eff2fd"/>
<rect x="833.9" y="376.9" width="9.2" height="8.2" fill="#eff3fc" stroke="#ea6a3d" stroke-width="1.8"/>
<rect x="832" y="403" width="12" height="18.7" fill="#eff2fd"/>
<rect x="833.9" y="408.9" width="9.2" height="8.2" fill="#eff3fc" stroke="#ea6a3d" stroke-width="1.8"/>
<rect x="832" y="435" width="12" height="18.7" fill="#eff2fd"/>
<rect x="833.9" y="440.9" width="9.2" height="8.2" fill="#eff3fc" stroke="#ea6a3d" stroke-width="1.8"/>
<rect x="832" y="467" width="12" height="18.7" fill="#eff2fd"/>
<rect x="833.9" y="472.9" width="9.2" height="8.2" fill="#eff3fc" stroke="#ea6a3d" stroke-width="1.8"/>
<rect x="832" y="499" width="12" height="18.7" fill="#eff2fd"/>
<rect x="833.9" y="504.9" width="9.2" height="8.2" fill="#eff3fc" stroke="#ea6a3d" stroke-width="1.8"/>
<rect x="832" y="531" width="12" height="18.7" fill="#eff2fd"/>
<rect x="833.9" y="536.9" width="9.2" height="8.2" fill="#eff3fc" stroke="#ea6a3d" stroke-width="1.8"/>
<rect x="832" y="563" width="12" height="18.7" fill="#eff2fd"/>
<rect x="833.9" y="568.9" width="9.2" height="8.2" fill="#eff3fc" stroke="#ea6a3d" stroke-width="1.8"/>
<rect x="832" y="595" width="12" height="18.7" fill="#eff2fd"/>
<rect x="833.9" y="600.9" width="9.2" height="8.2" fill="#eff3fc" stroke="#ea6a3d" stroke-width="1.8"/>
<rect x="832" y="627" width="12" height="18.7" fill="#eff2fd"/>
<rect x="833.9" y="632.9" width="9.2" height="8.2" fill="#eff3fc" stroke="#ea6a3d" stroke-width="1.8"/>
<rect x="832" y="659" width="12" height="18.7" fill="#eff2fd"/>
<rect x="833.9" y="664.9" width="9.2" height="8.2" fill="#eff3fc" stroke="#ea6a3d" stroke-width="1.8"/>
<rect x="1049" y="371" width="12" height="18.7" fill="#eff2fd"/>
<rect x="1050.9" y="376.9" width="9.2" height="8.2" fill="#eff3fc" stroke="#ea6a3d" stroke-width="1.8"/>
<rect x="1049" y="403" width="12" height="18.7" fill="#eff2fd"/>
<rect x="1050.9" y="408.9" width="9.2" height="8.2" fill="#eff3fc" stroke="#ea6a3d" stroke-width="1.8"/>
<rect x="1049" y="435" width="12" height="18.7" fill="#eff2fd"/>
<rect x="1050.9" y="440.9" width="9.2" height="8.2" fill="#eff3fc" stroke="#ea6a3d" stroke-width="1.8"/>
<rect x="1049" y="467" width="12" height="18.7" fill="#eff2fd"/>
<rect x="1050.9" y="472.9" width="9.2" height="8.2" fill="#eff3fc" stroke="#ea6a3d" stroke-width="1.8"/>
<rect x="1049" y="499" width="12" height="18.7" fill="#eff2fd"/>
<rect x="1050.9" y="504.9" width="9.2" height="8.2" fill="#eff3fc" stroke="#ea6a3d" stroke-width="1.8"/>
<rect x="381.5" y="370.5" width="29" height="21" rx="3" fill="none" stroke="#a5a5a5" stroke-width="1"/>
<path d="M387 377.5 H393 M387 380 H393 M387 382.5 H393" stroke="#999" stroke-width="0.9"/>
<path d="M848 547.5 H915 M1065 515.5 H1123" stroke="#f00" stroke-width="1.2"/>
</svg>
<div class="a doc" style="left:67px;top:50px;font:bold 29.6px 'Liberation Sans';letter-spacing:-0.7px;-webkit-text-stroke:0.35px #333;color:#333;line-height:34px;white-space:nowrap;transform:scaleX(0.93);transform-origin:0 0">MARKETING CHECKLIST</div>
<div class="a doc" style="left:66px;top:132px;width:434px;text-align:center;font:bold 14.5px 'Liberation Sans';letter-spacing:0.25px;color:#fff;line-height:17px">Offline marketing</div>
<div class="a doc" style="left:500px;top:132px;width:435px;text-align:center;font:bold 14.5px 'Liberation Sans';letter-spacing:0.25px;color:#fff;line-height:17px">Online marketing</div>
<div class="a it" style="left:104.5px;top:166px;letter-spacing:0.16px">Business cards</div>
<div class="a it" style="left:104.5px;top:198px;letter-spacing:0.18px">Flyers</div>
<div class="a it" style="left:104.5px;top:230px;letter-spacing:0.42px">Books</div>
<div class="a it" style="left:104.5px;top:262px;letter-spacing:0.31px">Coupons</div>
<div class="a it" style="left:104.5px;top:294px;letter-spacing:0.07px">Seasonal gifts</div>
<div class="a it" style="left:104.5px;top:326px;letter-spacing:0.50px">Cross-promotion</div>
<div class="a it" style="left:104.5px;top:358px;letter-spacing:0.46px">Community engagement</div>
<div class="a it" style="left:104.5px;top:390px;letter-spacing:0.33px">Newspapers/magazines</div>
<div class="a it" style="left:104.5px;top:422px;letter-spacing:0.46px">Billboards</div>
<div class="a it" style="left:104.5px;top:454px;letter-spacing:0.02px">Events</div>
<div class="a it" style="left:321.5px;top:166px;letter-spacing:-0.10px">Radio/TV</div>
<div class="a it" style="left:321.5px;top:198px;letter-spacing:0.09px">Press releases</div>
<div class="a it" style="left:321.5px;top:230px;letter-spacing:0.22px">Trade shows</div>
<div class="a it" style="left:321.5px;top:262px;letter-spacing:0.32px">Free workshops</div>
<div class="a it" style="left:321.5px;top:294px;letter-spacing:0.44px">Direct mail</div>
<div class="a it" style="left:321.5px;top:326px;letter-spacing:0.60px">Other</div>
<div class="a it" style="left:538.5px;top:166px;letter-spacing:0.23px">Website design</div>
<div class="a it" style="left:538.5px;top:198px;letter-spacing:-0.90px">SEO</div>
<div class="a it" style="left:538.5px;top:230px;letter-spacing:0.17px">Landing pages</div>
<div class="a it" style="left:538.5px;top:262px;letter-spacing:-0.03px">Google Ads</div>
<div class="a it" style="left:538.5px;top:294px;letter-spacing:0.03px">Facebook Ads</div>
<div class="a it" style="left:538.5px;top:326px;letter-spacing:0.30px">Instagram Ads</div>
<div class="a it" style="left:538.5px;top:358px;letter-spacing:0.09px">YouTube Ads</div>
<div class="a it" style="left:538.5px;top:390px;letter-spacing:0.25px">Twitter Ads</div>
<div class="a it" style="left:538.5px;top:422px;letter-spacing:0.17px">LinkedIn Ads</div>
<div class="a it" style="left:538.5px;top:454px;letter-spacing:0.05px">Social media</div>
<div class="a it" style="left:755.5px;top:166px;letter-spacing:0.49px">Newsletters</div>
<div class="a it" style="left:755.5px;top:198px;letter-spacing:0.40px">Online webinars</div>
<div class="a it" style="left:755.5px;top:230px;letter-spacing:0.10px">Live events</div>
<div class="a it" style="left:755.5px;top:262px;letter-spacing:0.39px">Lead generation</div>
<div class="a it" style="left:755.5px;top:294px;letter-spacing:-0.00px">Analytics</div>
<div class="a doc" style="left:72px;top:502px;font-size:12.6px;letter-spacing:0.55px;color:#333;line-height:15px">Notes</div>
</div>
</body></html>
